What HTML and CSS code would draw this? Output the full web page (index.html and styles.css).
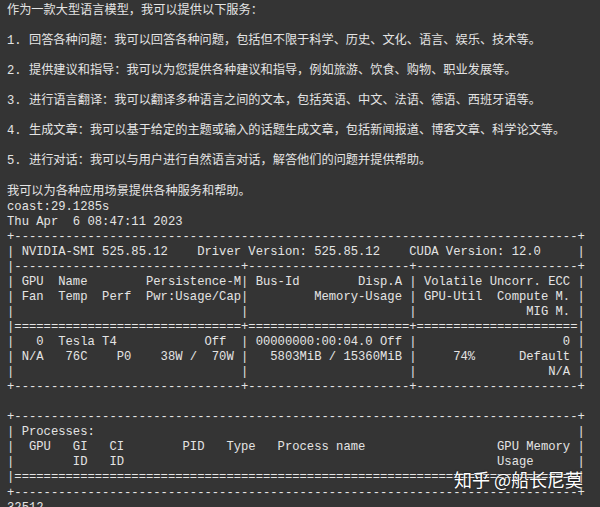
FILE: index.html
```html
<!DOCTYPE html>
<html lang="zh">
<head>
<meta charset="utf-8">
<title>output</title>
<link rel="stylesheet" href="styles.css">
</head>
<body>
<main class="output">
<pre class="log">作为一款大型语言模型，我可以提供以下服务：

1. 回答各种问题：我可以回答各种问题，包括但不限于科学、历史、文化、语言、娱乐、技术等。

2. 提供建议和指导：我可以为您提供各种建议和指导，例如旅游、饮食、购物、职业发展等。

3. 进行语言翻译：我可以翻译多种语言之间的文本，包括英语、中文、法语、德语、西班牙语等。

4. 生成文章：我可以基于给定的主题或输入的话题生成文章，包括新闻报道、博客文章、科学论文等。

5. 进行对话：我可以与用户进行自然语言对话，解答他们的问题并提供帮助。

我可以为各种应用场景提供各种服务和帮助。
coast:29.1285s
Thu Apr  6 08:47:11 2023
+-----------------------------------------------------------------------------+
| NVIDIA-SMI 525.85.12    Driver Version: 525.85.12    CUDA Version: 12.0     |
|-------------------------------+----------------------+----------------------+
| GPU  Name        Persistence-M| Bus-Id        Disp.A | Volatile Uncorr. ECC |
| Fan  Temp  Perf  Pwr:Usage/Cap|         Memory-Usage | GPU-Util  Compute M. |
|                               |                      |               MIG M. |
|===============================+======================+======================|
|   0  Tesla T4            Off  | 00000000:00:04.0 Off |                    0 |
| N/A   76C    P0    38W /  70W |   5803MiB / 15360MiB |     74%      Default |
|                               |                      |                  N/A |
+-------------------------------+----------------------+----------------------+
                                                                               
+-----------------------------------------------------------------------------+
| Processes:                                                                  |
|  GPU   GI   CI        PID   Type   Process name                  GPU Memory |
|        ID   ID                                                   Usage      |
|=============================================================================|
+-----------------------------------------------------------------------------+
32512</pre>
<div class="watermark">知乎 @船长尼莫</div>
</main>
</body>
</html>
```

FILE: styles.css
```css
html {
  overflow: hidden;
  background: #343434;
}

body {
  margin: 0;
  padding: 4px 0 0 7px;
  background: #343434;
  color: #e4e4e4;
  height: 507px;
  box-sizing: border-box;
}

.output {
  position: relative;
  height: 100%;
}

.log {
  margin: 0;
  font-family: "Liberation Mono", "Noto Sans CJK SC", monospace;
  font-size: 12.2px;
  line-height: 15.05px;
  white-space: pre;
}

.watermark {
  position: absolute;
  right: 17px;
  top: 464px;
  font-family: "Noto Sans CJK SC", sans-serif;
  font-size: 18px;
  line-height: 22px;
  color: #ffffff;
  text-shadow: 0 0 2px rgba(0, 0, 0, 0.7);
}
```
